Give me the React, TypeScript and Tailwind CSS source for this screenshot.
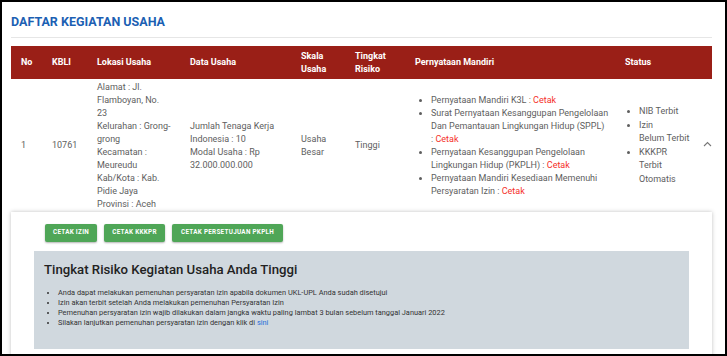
import React from 'react';

const PERNYATAAN: { lines: string[] }[] = [
  { lines: ['Pernyataan Mandiri K3L :'] },
  { lines: ['Surat Pernyataan Kesanggupan Pengelolaan', 'Dan Pemantauan Lingkungan Hidup (SPPL)', ':'] },
  { lines: ['Pernyataan Kesanggupan Pengelolaan', 'Lingkungan Hidup (PKPLH) :'] },
  { lines: ['Pernyataan Mandiri Kesediaan Memenuhi', 'Persyaratan Izin :'] },
];

const STATUS: string[][] = [['NIB Terbit'], ['Izin', 'Belum Terbit'], ['KKKPR', 'Terbit', 'Otomatis']];

const LOKASI = [
  'Alamat : Jl.',
  'Flamboyan, No.',
  '23',
  'Kelurahan : Grong-',
  'grong',
  'Kecamatan :',
  'Meureudu',
  'Kab/Kota : Kab.',
  'Pidie Jaya',
  'Provinsi : Aceh',
];

const INFO = [
  'Anda dapat melakukan pemenuhan persyaratan izin apabila dokumen UKL-UPL Anda sudah disetujui',
  'Izin akan terbit setelah Anda melakukan pemenuhan Persyaratan Izin',
  'Pemenuhan persyaratan izin wajib dilakukan dalam jangka waktu paling lambat 3 bulan sebelum tanggal Januari 2022',
];

const App: React.FC = () => {
  return (
    <div className="w-[727px] h-[356px] overflow-hidden border-2 border-black bg-white font-['Roboto',sans-serif]">
      <div className="pl-[9px] pr-[13px] pt-[10px]">
        {/* Title */}
        <h1 className="text-[12.5px] leading-[20px] font-bold text-[#1c5fb3]">DAFTAR KEGIATAN USAHA</h1>
        <div className="mt-[5px] h-px bg-[#e6e6e6]" />

        {/* Table */}
        <table className="mt-[8px] w-[701px] table-fixed border-collapse text-[9px] leading-[13px]">
          <colgroup>
            <col className="w-[31px]" />
            <col className="w-[45px]" />
            <col className="w-[93px]" />
            <col className="w-[111px]" />
            <col className="w-[54px]" />
            <col className="w-[60px]" />
            <col className="w-[210px]" />
            <col className="w-[80px]" />
            <col className="w-[17px]" />
          </colgroup>
          <thead>
            <tr className="h-[33px] bg-[#9a1f17] text-left font-bold text-white">
              <th className="pl-[10px] font-bold">No</th>
              <th className="pl-[10px] font-bold">KBLI</th>
              <th className="pl-[10px] font-bold">Lokasi Usaha</th>
              <th className="pl-[10px] font-bold">Data Usaha</th>
              <th className="pl-[10px] font-bold">Skala<br />Usaha</th>
              <th className="pl-[10px] font-bold">Tingkat<br />Risiko</th>
              <th className="pl-[10px] font-bold">Pernyataan Mandiri</th>
              <th className="pl-[10px] font-bold">Status</th>
              <th />
            </tr>
          </thead>
          <tbody>
            <tr className="h-[133px] align-middle text-[#5e5e5e]">
              <td className="pl-[10px]">1</td>
              <td className="pl-[10px]">10761</td>
              <td className="pl-[10px] whitespace-nowrap">
                {LOKASI.map(l => (
                  <div key={l}>{l}</div>
                ))}
              </td>
              <td className="pl-[10px] whitespace-nowrap">
                Jumlah Tenaga Kerja<br />Indonesia : 10<br />Modal Usaha : Rp<br />32.000.000.000
              </td>
              <td className="pl-[10px]">Usaha<br />Besar</td>
              <td className="pl-[10px]">Tinggi</td>
              <td className="pl-[10px]">
                <ul className="list-disc pl-[16px] whitespace-nowrap">
                  {PERNYATAAN.map((p, i) => (
                    <li key={i}>
                      {p.lines.map((l, j) => (
                        <React.Fragment key={j}>
                          {j > 0 && <br />}
                          {l}
                        </React.Fragment>
                      ))}{' '}
                      <span className="text-[#f5302a]">Cetak</span>
                    </li>
                  ))}
                </ul>
              </td>
              <td className="pl-[10px]">
                <ul className="list-disc pl-[14px] whitespace-nowrap leading-[13.5px]">
                  {STATUS.map((s, i) => (
                    <li key={i}>
                      {s.map((l, j) => (
                        <div key={j}>{l}</div>
                      ))}
                    </li>
                  ))}
                </ul>
              </td>
              <td>
                <svg width="9" height="6" viewBox="0 0 9 6" className="ml-[8px] mt-[-3px]">
                  <path d="M1 5 L4.5 1.5 L8 5" fill="none" stroke="#777" strokeWidth="1.1" />
                </svg>
              </td>
            </tr>
          </tbody>
        </table>

        {/* Expanded detail */}
        <div className="w-[701px] bg-white pt-[12px] pb-[10px] shadow-[0_0_4px_rgba(0,0,0,0.25)]">
          <div className="flex gap-[7px] pl-[34px]">
            <button className="h-[18px] w-[52px] rounded-[2px] bg-[#4fa657] text-[6.3px] font-bold tracking-[0.3px] text-white shadow-[0_1px_2px_rgba(0,0,0,0.3)]">
              CETAK IZIN
            </button>
            <button className="h-[18px] w-[61px] rounded-[2px] bg-[#4fa657] text-[6.3px] font-bold tracking-[0.3px] text-white shadow-[0_1px_2px_rgba(0,0,0,0.3)]">
              CETAK KKKPR
            </button>
            <button className="h-[18px] w-[111px] rounded-[2px] bg-[#4fa657] text-[6.3px] font-bold tracking-[0.3px] text-white shadow-[0_1px_2px_rgba(0,0,0,0.3)]">
              CETAK PERSETUJUAN PKPLH
            </button>
          </div>

          <div className="mx-[23px] mt-[9px] h-[98px] bg-[#d0d8de] px-[10px] pt-[11px]">
            <h2 className="text-[13.2px] leading-[16px] font-medium text-[#222]">Tingkat Risiko Kegiatan Usaha Anda Tinggi</h2>
            <ul className="mt-[10px] list-disc pl-[14px] text-[7.4px] leading-[10px] text-[#333]">
              {INFO.map(t => (
                <li key={t}>{t}</li>
              ))}
              <li>
                Silakan lanjutkan pemenuhan persyaratan izin dengan klik di{' '}
                <span className="text-[#1e6fd9]">sini</span>
              </li>
            </ul>
          </div>
        </div>
      </div>
    </div>
  );
};

export default App;
